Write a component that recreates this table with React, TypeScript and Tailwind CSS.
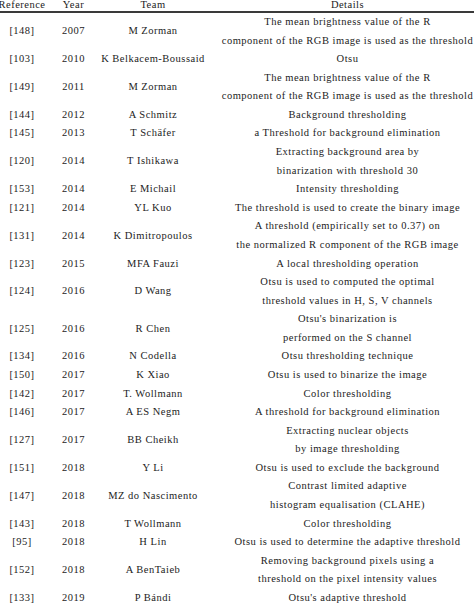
import React from "react";

type Row = { ref: string; year: string; team: string; details: string[] };

const rows: Row[] = [
  { ref: "[148]", year: "2007", team: "M Zorman", details: ["The mean brightness value of the R", "component of the RGB image is used as the threshold"] },
  { ref: "[103]", year: "2010", team: "K Belkacem-Boussaid", details: ["Otsu"] },
  { ref: "[149]", year: "2011", team: "M Zorman", details: ["The mean brightness value of the R", "component of the RGB image is used as the threshold"] },
  { ref: "[144]", year: "2012", team: "A Schmitz", details: ["Background thresholding"] },
  { ref: "[145]", year: "2013", team: "T Schäfer", details: ["a Threshold for background elimination"] },
  { ref: "[120]", year: "2014", team: "T Ishikawa", details: ["Extracting background area by", "binarization with threshold 30"] },
  { ref: "[153]", year: "2014", team: "E Michail", details: ["Intensity thresholding"] },
  { ref: "[121]", year: "2014", team: "YL Kuo", details: ["The threshold is used to create the binary image"] },
  { ref: "[131]", year: "2014", team: "K Dimitropoulos", details: ["A threshold (empirically set to 0.37) on", "the normalized R component of the RGB image"] },
  { ref: "[123]", year: "2015", team: "MFA Fauzi", details: ["A local thresholding operation"] },
  { ref: "[124]", year: "2016", team: "D Wang", details: ["Otsu is used to computed the optimal", "threshold values in H, S, V channels"] },
  { ref: "[125]", year: "2016", team: "R Chen", details: ["Otsu's binarization is", "performed on the S channel"] },
  { ref: "[134]", year: "2016", team: "N Codella", details: ["Otsu thresholding technique"] },
  { ref: "[150]", year: "2017", team: "K Xiao", details: ["Otsu is used to binarize the image"] },
  { ref: "[142]", year: "2017", team: "T. Wollmann", details: ["Color thresholding"] },
  { ref: "[146]", year: "2017", team: "A ES Negm", details: ["A threshold for background elimination"] },
  { ref: "[127]", year: "2017", team: "BB Cheikh", details: ["Extracting nuclear objects", "by image thresholding"] },
  { ref: "[151]", year: "2018", team: "Y Li", details: ["Otsu is used to exclude the background"] },
  { ref: "[147]", year: "2018", team: "MZ do Nascimento", details: ["Contrast limited adaptive", "histogram equalisation (CLAHE)"] },
  { ref: "[143]", year: "2018", team: "T Wollmann", details: ["Color thresholding"] },
  { ref: "[95]", year: "2018", team: "H Lin", details: ["Otsu is used to determine the adaptive threshold"] },
  { ref: "[152]", year: "2018", team: "A BenTaieb", details: ["Removing background pixels using a", "threshold on the pixel intensity values"] },
  { ref: "[133]", year: "2019", team: "P Bándi", details: ["Otsu's adaptive threshold"] },
];

const cell = "flex shrink-0 items-center justify-center whitespace-nowrap";

export default function App() {
  return (
    <div
      className="h-[604px] w-[474px] overflow-hidden bg-white text-[10.5px] tracking-[0.5px] text-[#1c1c1c]"
      style={{ fontFamily: '"Liberation Serif", "Times New Roman", serif' }}
    >
      <div className="w-[492px]">
        <div className="flex h-[11px] items-end pb-[2px] leading-[9px]">
          <div className={`${cell} w-[44px]`}>Reference</div>
          <div className={`${cell} w-[59px]`}>Year</div>
          <div className={`${cell} w-[100px]`}>Team</div>
          <div className={`${cell} w-[289px]`}>Details</div>
        </div>
        <div className="h-[1.5px] w-full bg-[#3a3a3a]" />
        <div className="flex flex-col pt-[0.5px] leading-[18.58px]">
          {rows.map((r, i) => (
            <div key={i} className="flex">
              <div className={`${cell} w-[44px]`}>{r.ref}</div>
              <div className={`${cell} w-[59px]`}>{r.year}</div>
              <div className={`${cell} w-[100px]`}>{r.team}</div>
              <div className="flex w-[289px] shrink-0 flex-col items-center">
                {r.details.map((d, j) => (
                  <div key={j} className="h-[18.58px] whitespace-nowrap">
                    {d}
                  </div>
                ))}
              </div>
            </div>
          ))}
        </div>
      </div>
    </div>
  );
}
